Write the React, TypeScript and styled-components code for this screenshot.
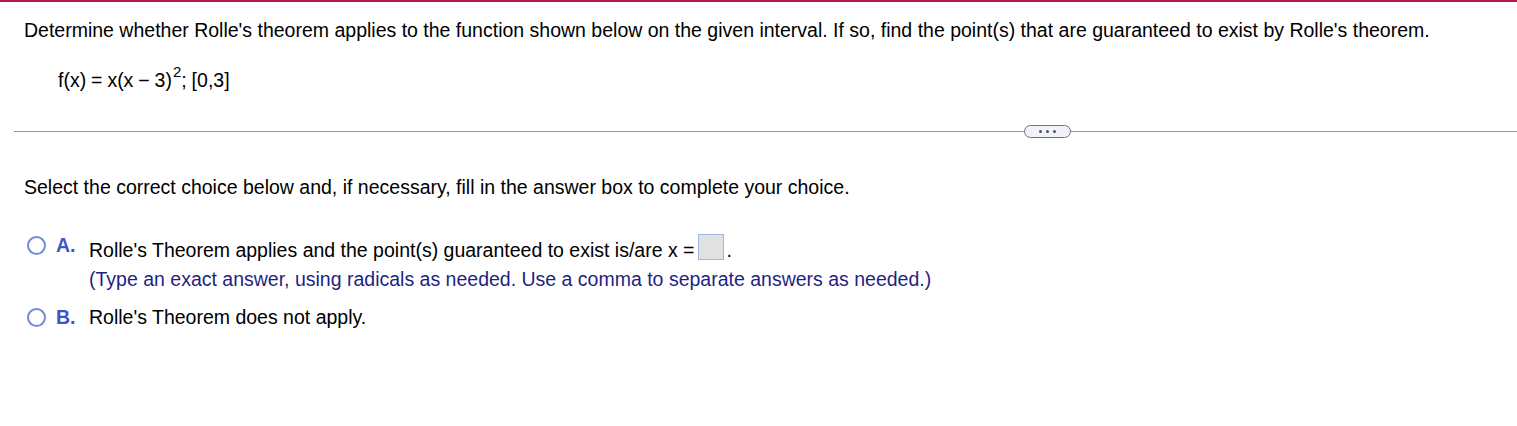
import React from "react";
import styled, { createGlobalStyle } from "styled-components";

const Global = createGlobalStyle`
  html, body { margin: 0; padding: 0; background: #ffffff; }
  body { font-family: "Liberation Sans", Arial, sans-serif; color: #000; }
`;

const Page = styled.div`
  border-top: 2px solid #b3164f;
  min-height: 424px;
  display: flex;
  flex-direction: column;
`;

const Question = styled.div`
  padding: 16.5px 0 0 24px;
  display: flex;
  flex-direction: column;
`;

const Para = styled.div`
  font-size: 19.5px;
  line-height: 23px;
`;

const Formula = styled.div`
  font-size: 19.5px;
  line-height: 23px;
  margin: 27px 0 0 34px;
  word-spacing: -0.5px;
`;

const Sup = styled.sup`
  font-size: 15px;
  vertical-align: 10px;
  line-height: 0;
  margin-left: 1px;
`;

const DividerRow = styled.div`
  position: relative;
  margin: 39.5px 0 0 14px;
  height: 1px;
  background: #8c95a8;
`;

const MoreButton = styled.div`
  position: absolute;
  left: 1010px;
  top: -6px;
  width: 45px;
  height: 11px;
  border: 1px solid #67718a;
  border-radius: 7px;
  background: #f1f3f6;
  display: flex;
  align-items: center;
  justify-content: center;
  gap: 4px;
`;

const Dot = styled.span`
  width: 3px;
  height: 3px;
  border-radius: 50%;
  background: #4a5268;
`;

const Answer = styled.div`
  padding: 43.5px 0 0 24px;
  display: flex;
  flex-direction: column;
`;

const Choices = styled.div`
  margin-top: 35px;
  display: flex;
  flex-direction: column;
  gap: 15px;
`;

const Choice = styled.div`
  display: grid;
  grid-template-columns: 32px 33px 1fr;
  align-items: start;
`;

const Radio = styled.span`
  width: 15px;
  height: 15px;
  border: 2px solid #7489da;
  border-radius: 50%;
  margin-top: 2px;
  margin-left: 3px;
`;

const Letter = styled.span`
  font-weight: bold;
  font-size: 19.5px;
  line-height: 23px;
  color: #3b55c9;
`;

const Body = styled.div`
  display: flex;
  flex-direction: column;
  gap: 6px;
`;

const Line = styled.div`
  font-size: 19.5px;
  line-height: 23px;
`;

const Hint = styled.div`
  font-size: 19.5px;
  line-height: 23px;
  color: #1f1f85;
`;

const AnswerBox = styled.span`
  display: inline-block;
  width: 24px;
  height: 24px;
  margin: 0 3px 0 3px;
  vertical-align: -3px;
  background: #e1e1e1;
  border: 1px solid #9fb6ec;
`;

export default function App() {
  return (
    <>
      <Global />
      <Page>
        <Question>
          <Para>
            Determine whether Rolle's theorem applies to the function shown below on the given interval. If so, find the point(s) that are guaranteed to exist by Rolle's theorem.
          </Para>
          <Formula>
            f(x) = x(x − 3)<Sup>2</Sup>; [0,3]
          </Formula>
        </Question>
        <DividerRow>
          <MoreButton>
            <Dot />
            <Dot />
            <Dot />
          </MoreButton>
        </DividerRow>
        <Answer>
          <Para>Select the correct choice below and, if necessary, fill in the answer box to complete your choice.</Para>
          <Choices>
            <Choice>
              <Radio />
              <Letter>A.</Letter>
              <Body>
                <Line>
                  Rolle's Theorem applies and the point(s) guaranteed to exist is/are x =
                  <AnswerBox />.
                </Line>
                <Hint>(Type an exact answer, using radicals as needed. Use a comma to separate answers as needed.)</Hint>
              </Body>
            </Choice>
            <Choice>
              <Radio />
              <Letter>B.</Letter>
              <Body>
                <Line>Rolle's Theorem does not apply.</Line>
              </Body>
            </Choice>
          </Choices>
        </Answer>
      </Page>
    </>
  );
}
